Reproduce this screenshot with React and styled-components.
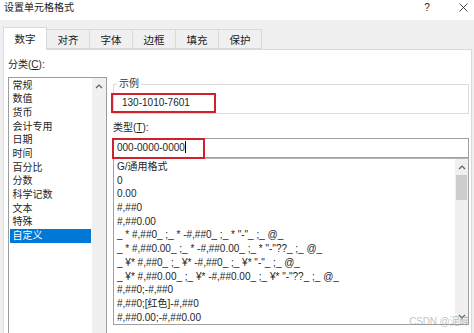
import React from "react";
import styled, { createGlobalStyle } from "styled-components";

const GlobalStyle = createGlobalStyle`
  html, body {
    margin: 0;
    padding: 0;
    background: #fff;
  }
  body {
    font-family: "Liberation Sans", "Noto Sans CJK SC", sans-serif;
    font-size: 10px;
  }
`;

const Dialog = styled.div`
  position: relative;
  width: 474px;
  height: 333px;
  overflow: hidden;
  background: #f0f0f0;
  color: #1e1e1e;
  display: flex;
  flex-direction: column;
`;

const TitleBar = styled.div`
  flex: none;
  height: 20px;
  box-sizing: border-box;
  padding: 0 0 5px 4px;
  background: #fff;
  display: flex;
  align-items: center;
`;

const Title = styled.span`
  font-size: 10px;
  line-height: 14px;
  color: #1a1a1a;
`;

const TitleButtons = styled.div`
  margin-left: auto;
  display: flex;
  align-items: center;
  gap: 16px;
  padding-right: 1px;
`;

const TitleButton = styled.span`
  width: 20px;
  height: 14px;
  display: flex;
  align-items: center;
  justify-content: center;
  font-size: 10px;
  color: #222;
`;

const TabStrip = styled.div`
  flex: none;
  height: 29px;
  display: flex;
  align-items: flex-end;
  padding-left: 3px;
  position: relative;
  z-index: 1;
`;

const Tab = styled.div`
  width: 44px;
  box-sizing: border-box;
  margin-left: -1px;
  &:first-child {
    margin-left: 0;
  }
  height: ${(p) => (p.$active ? "23px" : "20px")};
  margin-bottom: ${(p) => (p.$active ? "-1px" : "0")};
  padding-bottom: ${(p) => (p.$active ? "2px" : "0")};
  background: ${(p) => (p.$active ? "#fff" : "#f0f0f0")};
  border: 1px solid #d9d9d9;
  border-bottom: ${(p) => (p.$active ? "none" : "1px solid #d9d9d9")};
  position: relative;
  z-index: ${(p) => (p.$active ? 2 : 1)};
  display: flex;
  align-items: center;
  justify-content: center;
  font-size: 10.5px;
  color: #1a1a1a;
`;

const Page = styled.div`
  flex: none;
  height: 320px;
  margin: 0 2px 0 3px;
  background: #fff;
  border: 1px solid #d9d9d9;
  border-bottom: none;
  display: flex;
  gap: 6px;
  padding: 0 2px 0 4px;
`;

const LeftColumn = styled.div`
  width: 99px;
  flex: none;
  padding-top: 8px;
`;

const FieldLabel = styled.div`
  line-height: 14px;
  font-size: 10px;
  margin-top: ${(p) => p.$mt || 0}px;
`;

const CategoryBox = styled.div`
  margin-top: 5px;
  height: 260px;
  box-sizing: border-box;
  border: 1px solid #9c9c9c;
  display: flex;
`;

const CategoryItems = styled.div`
  flex: 1;
  padding: 0.5px 1px 0 1px;
  min-width: 0;
`;

const CategoryItem = styled.div`
  height: 13.7px;
  line-height: 13.7px;
  padding-left: 2.5px;
  font-size: 10px;
  white-space: nowrap;
  background: ${(p) => (p.$selected ? "#0078d7" : "transparent")};
  color: ${(p) => (p.$selected ? "#fff" : "#1e1e1e")};
`;

const ScrollTrack = styled.div`
  flex: none;
  width: ${(p) => p.$w || 14}px;
  background: #f0f0f0;
  display: flex;
  flex-direction: column;
`;

const ScrollArrow = styled.div`
  flex: none;
  height: 16px;
  display: flex;
  align-items: center;
  justify-content: center;
  margin-top: ${(p) => (p.$bottom ? "auto" : "0")};
`;

const ScrollThumb = styled.div`
  flex: none;
  height: 25px;
  margin: 0 1px;
  background: #cdcdcd;
`;

const RightColumn = styled.div`
  flex: 1;
  min-width: 0;
  padding-top: 27px;
  display: flex;
  flex-direction: column;
`;

const GroupBox = styled.fieldset`
  margin: 0;
  padding: 0;
  min-width: 0;
  border: 1px solid #dcdcdc;
`;

const GroupLegend = styled.legend`
  margin-left: 3px;
  padding: 0 2px;
  line-height: 14px;
  font-size: 10px;
  color: #333;
`;

const SampleValue = styled.div`
  margin: 2px 0 0 -3px;
  width: 105px;
  height: 20px;
  box-sizing: border-box;
  border: 2px solid #d0202b;
  padding-left: 9px;
  line-height: 16px;
  font-size: 10px;
`;

const TypeInput = styled.div`
  position: relative;
  margin-top: 3px;
  height: 20px;
  box-sizing: border-box;
  border: 1px solid #a0a0a0;
  padding-left: 3px;
  line-height: 18px;
  font-size: 10px;
`;

const Caret = styled.span`
  display: inline-block;
  width: 0;
  height: 12px;
  border-left: 1px solid #000;
  vertical-align: -2px;
  margin-left: 0.5px;
`;

const Highlight = styled.span`
  position: absolute;
  left: -2px;
  top: -1px;
  width: 93px;
  height: 21px;
  box-sizing: border-box;
  border: 2px solid #d0202b;
`;

const FormatList = styled.div`
  height: 167px;
  box-sizing: border-box;
  border: 1px solid #a0a0a0;
  border-top-color: #b4b4b4;
  display: flex;
`;

const FormatItems = styled.div`
  flex: 1;
  min-width: 0;
  padding: 1px 0 0 3px;
  overflow: hidden;
`;

const FormatItem = styled.div`
  height: 13.7px;
  line-height: 13.7px;
  font-size: 10px;
  white-space: pre;
  color: #1e1e1e;
`;

const Watermark = styled.span`
  position: absolute;
  right: 5px;
  bottom: 5px;
  font-size: 10px;
  line-height: 12px;
  color: rgba(140, 140, 140, 0.55);
  letter-spacing: -0.2px;
`;

const Chevron = ({ down }) => (
  <svg width="8" height="5" viewBox="0 0 8 5">
    <polyline
      points={down ? "1,1 4,4 7,1" : "1,4 4,1 7,4"}
      fill="none"
      stroke="#606060"
      strokeWidth="1.2"
    />
  </svg>
);

const CloseIcon = () => (
  <svg width="9" height="9" viewBox="0 0 9 9">
    <path d="M0.5 0.5 L8.5 8.5 M8.5 0.5 L0.5 8.5" stroke="#333" strokeWidth="0.9" />
  </svg>
);

const tabs = ["数字", "对齐", "字体", "边框", "填充", "保护"];

const categories = [
  "常规",
  "数值",
  "货币",
  "会计专用",
  "日期",
  "时间",
  "百分比",
  "分数",
  "科学记数",
  "文本",
  "特殊",
  "自定义",
];

const formats = [
  "G/通用格式",
  "0",
  "0.00",
  "#,##0",
  "#,##0.00",
  '_ * #,##0_ ;_ * -#,##0_ ;_ * "-"_ ;_ @_ ',
  '_ * #,##0.00_ ;_ * -#,##0.00_ ;_ * "-"??_ ;_ @_ ',
  '_ ¥* #,##0_ ;_ ¥* -#,##0_ ;_ ¥* "-"_ ;_ @_ ',
  '_ ¥* #,##0.00_ ;_ ¥* -#,##0.00_ ;_ ¥* "-"??_ ;_ @_ ',
  "#,##0;-#,##0",
  "#,##0;[红色]-#,##0",
  "#,##0.00;-#,##0.00",
];

const App = () => {
  return (
    <>
      <GlobalStyle />
      <Dialog>
        <TitleBar>
          <Title>设置单元格格式</Title>
          <TitleButtons>
            <TitleButton>?</TitleButton>
            <TitleButton>
              <CloseIcon />
            </TitleButton>
          </TitleButtons>
        </TitleBar>

        <TabStrip>
          {tabs.map((t, i) => (
            <Tab key={t} $active={i === 0}>
              {t}
            </Tab>
          ))}
        </TabStrip>

        <Page>
          <LeftColumn>
            <FieldLabel>
              分类(<u>C</u>):
            </FieldLabel>
            <CategoryBox>
              <CategoryItems>
                {categories.map((c) => (
                  <CategoryItem key={c} $selected={c === "自定义"}>
                    {c}
                  </CategoryItem>
                ))}
              </CategoryItems>
              <ScrollTrack $w={14}>
                <ScrollArrow>
                  <Chevron />
                </ScrollArrow>
              </ScrollTrack>
            </CategoryBox>
          </LeftColumn>

          <RightColumn>
            <GroupBox>
              <GroupLegend>示例</GroupLegend>
              <SampleValue>130-1010-7601</SampleValue>
            </GroupBox>

            <FieldLabel $mt={7}>
              类型(<u>T</u>):
            </FieldLabel>
            <TypeInput>
              000-0000-0000
              <Caret />
              <Highlight />
            </TypeInput>

            <FormatList>
              <FormatItems>
                {formats.map((f) => (
                  <FormatItem key={f}>{f}</FormatItem>
                ))}
              </FormatItems>
              <ScrollTrack $w={13}>
                <ScrollArrow>
                  <Chevron />
                </ScrollArrow>
                <ScrollThumb />
                <ScrollArrow $bottom>
                  <Chevron down />
                </ScrollArrow>
              </ScrollTrack>
            </FormatList>
          </RightColumn>
        </Page>

        <Watermark>CSDN @泥醉</Watermark>
      </Dialog>
    </>
  );
};

export default App;
